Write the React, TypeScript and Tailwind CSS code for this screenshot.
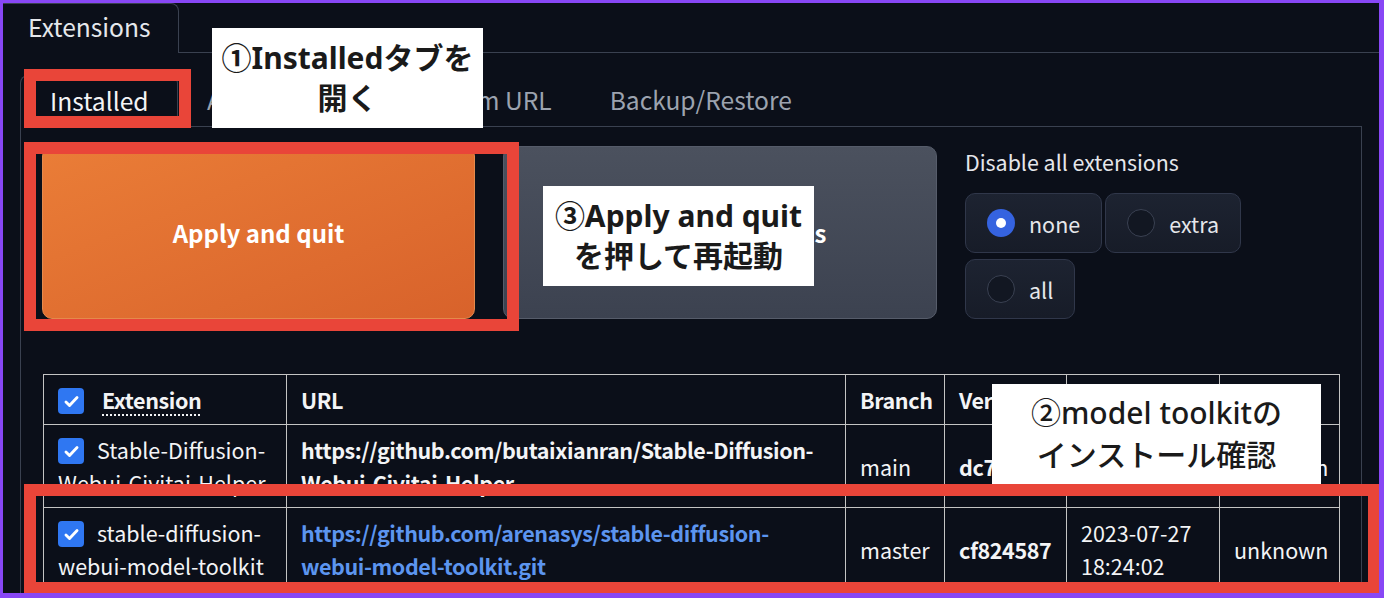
import React from "react";

const Check = ({ cls = "mr-[13px]" }: { cls?: string }) => (
  <span
    className={`inline-flex w-[26px] h-[26px] rounded-[4px] bg-[#2f77f2] items-center justify-center align-middle relative -top-[2px] ${cls}`}
  >
    <svg viewBox="0 0 24 24" className="w-[19px] h-[19px]" fill="none" stroke="white" strokeWidth="3.6" strokeLinecap="round" strokeLinejoin="round">
      <path d="M5 12.5l4.5 4.5L19 7" />
    </svg>
  </span>
);

const Radio = ({ label, selected }: { label: string; selected?: boolean }) => (
  <div className="flex items-center h-[60px] px-[21px] gap-[14px] rounded-[10px] border border-[#30374a] bg-linear-to-b from-[#1d2331] to-[#171c28]">
    {selected ? (
      <span className="w-[28px] h-[28px] rounded-full bg-[#3563e0] flex items-center justify-center">
        <span className="w-[10px] h-[10px] rounded-full bg-white" />
      </span>
    ) : (
      <span className="w-[28px] h-[28px] rounded-full border-[1.5px] border-[#3a4152] bg-[#121722]" />
    )}
    <span className="text-[21.5px] leading-[31px] text-[#e5e7eb]">{label}</span>
  </div>
);

export default function App() {
  const td = "border border-[#c4c4c4] px-[14px] py-[8px] align-middle";
  const tdb = "font-bold tracking-[-0.4px]";
  return (
    <div className="relative w-[1384px] h-[598px] overflow-hidden bg-[#0b0f19] text-[#e5e7eb] font-['Noto_Sans_CJK_JP','Noto_Sans',sans-serif]">
      {/* Top tab bar */}
      <div className="flex h-[53px] pt-[3px]">
        <div className="w-[179px] h-[50px] border-t border-r border-[#3a4150] rounded-tr-[8px] pl-[28px] pb-[4px] flex items-center text-[24.6px] text-[#e5e7eb]">
          Extensions
        </div>
        <div className="flex-1 border-b border-[#3a4150]" />
      </div>

      {/* Inner tabs + panel */}
      <div className="ml-[20px] w-[1342px] pt-[22px]">
        <div className="flex h-[52px] text-[24.6px]">
          <div className="w-[158px] h-[52px] border-l border-t border-r border-[#3a4150] rounded-t-[8px] pl-[29px] pb-[2px] flex items-center text-[#f3f4f6]">
            Installed
          </div>
          <div className="px-[29px] pb-[2px] flex items-center border-b border-[#3a4150] text-[#9ca3af]">Available</div>
          <div className="px-[29px] pb-[2px] flex items-center border-b border-[#3a4150] text-[#9ca3af]">Install from URL</div>
          <div className="px-[29px] pb-[2px] flex items-center border-b border-[#3a4150] text-[#9ca3af]">Backup/Restore</div>
          <div className="flex-1 border-b border-[#3a4150]" />
        </div>

        <div className="border-l border-r border-[#3a4150] pt-[19px] px-[21px] h-[500px]">
          <div className="grid grid-cols-[433px_434px_375px] gap-x-[28px] h-[173px]">
            <div className="rounded-[10px] bg-linear-to-br from-[#ea7d37] to-[#d8622b] border border-[#e48a4c] flex items-center justify-center text-[24px] font-bold text-white">
              Apply and quit
            </div>
            <div className="rounded-[10px] bg-linear-to-b from-[#4b515e] to-[#3c4250] border border-[#565c6a] flex items-center justify-center text-[24px] font-bold text-white">
              Check for updates
            </div>
            <div>
              <div className="text-[21.4px] leading-[31px] text-[#e5e7eb]">Disable all extensions</div>
              <div className="flex flex-wrap gap-x-[3px] gap-y-[6px] mt-[16px]">
                <Radio label="none" selected />
                <Radio label="extra" />
                <Radio label="all" />
              </div>
            </div>
          </div>

          <table className="mt-[55px] ml-[1px] w-[1296px] table-fixed border-collapse text-[21.5px] leading-[33px] text-[#f3f4f6]">
            <colgroup>
              <col className="w-[243px]" />
              <col className="w-[559px]" />
              <col className="w-[99px]" />
              <col className="w-[122px]" />
              <col className="w-[153px]" />
              <col className="w-[120px]" />
            </colgroup>
            <thead>
              <tr className="text-left">
                <th className={`${td} ${tdb} whitespace-nowrap`}>
                  <Check cls="mr-[18px]" />
                  <span className="underline decoration-dotted decoration-[1.5px] underline-offset-[5px]">Extension</span>
                </th>
                <th className={`${td} ${tdb}`}>URL</th>
                <th className={`${td} ${tdb}`}>Branch</th>
                <th className={`${td} ${tdb}`}>Version</th>
                <th className={`${td} ${tdb}`}>Date</th>
                <th className={`${td} ${tdb}`}>Update</th>
              </tr>
            </thead>
            <tbody>
              <tr>
                <td className={`${td} whitespace-nowrap`}>
                  <Check />Stable-Diffusion-
                  <br />
                  Webui-Civitai-Helper
                </td>
                <td className={`${td} ${tdb} whitespace-nowrap`}>
                  https://github.com/butaixianran/Stable-Diffusion-
                  <br />
                  Webui-Civitai-Helper
                </td>
                <td className={td}>main</td>
                <td className={`${td} ${tdb}`}>dc7f1e0b</td>
                <td className={td}>
                  2023-07-24
                  <br />
                  09:51:36
                </td>
                <td className={td}>unknown</td>
              </tr>
              <tr>
                <td className={`${td} whitespace-nowrap`}>
                  <Check />stable-diffusion-
                  <br />
                  webui-model-toolkit
                </td>
                <td className={`${td} ${tdb} whitespace-nowrap text-[#5c95ef]`}>
                  https://github.com/arenasys/stable-diffusion-
                  <br />
                  webui-model-toolkit.git
                </td>
                <td className={td}>master</td>
                <td className={`${td} ${tdb}`}>cf824587</td>
                <td className={td}>
                  2023-07-27
                  <br />
                  18:24:02
                </td>
                <td className={td}>unknown</td>
              </tr>
            </tbody>
          </table>
        </div>
      </div>

      {/* Annotations */}
      <div className="absolute left-[24px] top-[69px] w-[167px] h-[59px] border-[12px] border-[#e94539]" />
      <div className="absolute left-[24px] top-[142px] w-[495px] h-[189px] border-[12px] border-[#e94539]" />
      <div className="absolute left-[24px] top-[484px] w-[1356px] h-[110px] border-[12px] border-[#e94539]" />

      <div className="absolute left-[212px] top-[28px] w-[271px] h-[100px] bg-white flex flex-col items-center justify-center text-[30px] leading-[40px] font-bold text-[#1a1a1a] font-['Noto_Sans','Noto_Sans_CJK_JP',sans-serif]">
        <div>①Installedタブを</div>
        <div>開く</div>
      </div>
      <div className="absolute left-[543px] top-[186px] w-[271px] h-[100px] bg-white flex flex-col items-center justify-center text-[30px] leading-[40px] font-bold text-[#1a1a1a] font-['Noto_Sans','Noto_Sans_CJK_JP',sans-serif]">
        <div>③Apply and quit</div>
        <div>を押して再起動</div>
      </div>
      <div className="absolute left-[992px] top-[384px] w-[329px] h-[100px] bg-white flex flex-col items-center justify-center text-[30px] leading-[42px] font-medium text-[#1a1a1a] font-['Noto_Sans','Noto_Sans_CJK_JP',sans-serif]">
        <div>②model toolkitの</div>
        <div>インストール確認</div>
      </div>

      {/* Purple frame */}
      <div className="pointer-events-none absolute inset-0 border-t-[3px] border-l-[3px] border-r-[5px] border-b-[5px] border-[#8847f5]" />
    </div>
  );
}
